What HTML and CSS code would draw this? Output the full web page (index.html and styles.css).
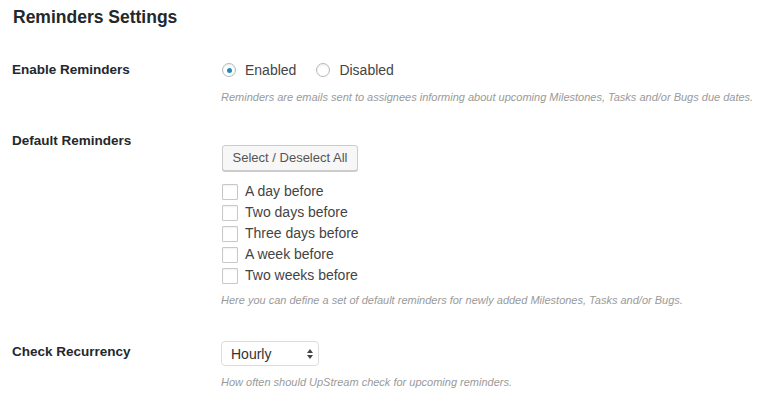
FILE: index.html
```html
<!DOCTYPE html>
<html>
<head>
<meta charset="utf-8">
<link rel="stylesheet" href="styles.css">
</head>
<body>
<h2 class="title">Reminders Settings</h2>

<div class="row row-enable">
  <div class="label">Enable Reminders</div>
  <div class="field">
    <div class="radios">
      <span class="opt"><span class="radio checked"></span>Enabled</span>
      <span class="opt"><span class="radio"></span>Disabled</span>
    </div>
    <p class="desc desc-1">Reminders are emails sent to assignees informing about upcoming Milestones, Tasks and/or Bugs due dates.</p>
  </div>
</div>

<div class="row row-default">
  <div class="label">Default Reminders</div>
  <div class="field field-default">
    <div class="button">Select / Deselect All</div>
    <ul class="checks">
      <li><span class="box"></span>A day before</li>
      <li><span class="box"></span>Two days before</li>
      <li><span class="box"></span>Three days before</li>
      <li><span class="box"></span>A week before</li>
      <li><span class="box"></span>Two weeks before</li>
    </ul>
    <p class="desc desc-2">Here you can define a set of default reminders for newly added Milestones, Tasks and/or Bugs.</p>
  </div>
</div>

<div class="row row-recur">
  <div class="label label-recur">Check Recurrency</div>
  <div class="field">
    <div class="select">
      <span>Hourly</span>
      <svg class="arrows" width="6" height="10" viewBox="0 0 6 10"><path d="M3 0 L6 4 L0 4 Z M0 6 L6 6 L3 10 Z" fill="#444"/></svg>
    </div>
    <p class="desc desc-3">How often should UpStream check for upcoming reminders.</p>
  </div>
</div>
</body>
</html>
```

FILE: styles.css
```css
html, body {
  margin: 0;
  padding: 0;
  background: #fff;
}
body {
  padding: 0 12px;
  font-family: "Liberation Sans", Arial, sans-serif;
  font-size: 14px;
  color: #444;
}
.title {
  margin: 6px 0 0 1px;
  font-size: 17.5px;
  line-height: 22px;
  font-weight: bold;
  color: #23282d;
}
.row {
  display: flex;
}
.label {
  width: 209px;
  flex: none;
  font-weight: bold;
  color: #23282d;
  line-height: 20px;
  font-size: 13.5px;
}
.row-enable {
  margin-top: 32px;
}
.radios {
  display: flex;
  line-height: 20px;
  color: #444;
}
.opt {
  display: flex;
  align-items: center;
  margin-right: 19px;
}
.radio {
  box-sizing: border-box;
  width: 14px;
  height: 14px;
  border: 1px solid #b4b9be;
  border-radius: 50%;
  margin: 0 9px 0 1px;
  display: flex;
  align-items: center;
  justify-content: center;
  box-shadow: inset 0 1px 2px rgba(0,0,0,0.08);
}
.radio.checked::after {
  content: "";
  width: 5px;
  height: 5px;
  border-radius: 50%;
  background: #1e8cbe;
}
.desc {
  margin: 0;
  font-size: 11px;
  line-height: 16px;
  font-style: italic;
  color: #9a9a9a;
}
.desc-1 { margin-top: 9px; }
.row-default {
  margin-top: 26px;
}
.field-default {
  padding-top: 14px;
}
.button {
  box-sizing: border-box;
  width: 136px;
  height: 26px;
  margin-left: 1px;
  border: 1px solid #ccc;
  border-radius: 3px;
  background: #f7f7f7;
  box-shadow: 0 1px 0 #ccc;
  font-size: 13px;
  line-height: 24px;
  text-align: center;
  color: #555;
}
.checks {
  list-style: none;
  margin: 10px 0 0 0;
  padding: 0;
}
.checks li {
  display: flex;
  align-items: center;
  height: 21px;
  line-height: 21px;
  color: #444;
}
.box {
  box-sizing: border-box;
  width: 16px;
  height: 16px;
  border: 1px solid #c8c8c8;
  border-radius: 1px;
  margin: 0 7px 0 1px;
  box-shadow: inset 0 1px 2px rgba(0,0,0,0.06);
}
.desc-2 { margin-top: 6px; }
.row-recur {
  margin-top: 33px;
}
.label-recur {
  margin-top: 1px;
}
.select {
  box-sizing: border-box;
  width: 98px;
  height: 25px;
  border: 1px solid #ddd;
  border-radius: 4px;
  background: #fff;
  display: flex;
  align-items: center;
  justify-content: space-between;
  padding: 0 5px 0 9px;
  color: #333;
  font-size: 14px;
}
.arrows {
  display: block;
}
.desc-3 { margin-top: 8px; }
```
